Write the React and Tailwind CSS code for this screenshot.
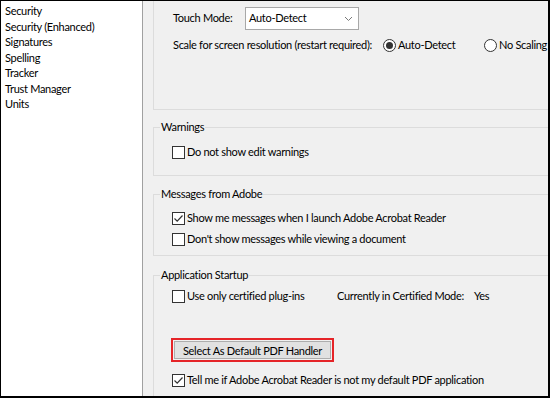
import React from 'react'

const navItems = ['Security', 'Security (Enhanced)', 'Signatures', 'Spelling', 'Tracker', 'Trust Manager', 'Units']

const Checkbox = ({ checked }) => (
  <span className="w-[13px] h-[13px] border border-[#333333] bg-white flex items-center justify-center shrink-0">
    {checked && (
      <svg width="11" height="11" viewBox="0 0 11 11">
        <path d="M1.5 5.5 L4.2 8.2 L9.5 2.5" fill="none" stroke="#333333" strokeWidth="1.2" />
      </svg>
    )}
  </span>
)

const Radio = ({ checked }) => (
  <span className="w-[13px] h-[13px] rounded-full border border-[#333333] bg-white flex items-center justify-center shrink-0">
    {checked && <span className="w-[7px] h-[7px] rounded-full bg-[#333333]" />}
  </span>
)

const CheckRow = ({ checked, children, className = '' }) => (
  <div className={`flex items-center h-[16px] whitespace-nowrap ${className}`}>
    <Checkbox checked={checked} />
    <span className="ml-[2px]">{children}</span>
  </div>
)

const Group = ({ title, className = '', children }) => (
  <fieldset className={`border border-r-0 border-[#dcdcdc] ${className}`}>
    <legend className="ml-[6px] px-[1px] leading-[16px]">{title}</legend>
    {children}
  </fieldset>
)

export default function App() {
  return (
    <div
      className="w-[550px] h-[398px] flex overflow-hidden border-black border-t border-l border-r-2 border-b-2 text-[11px] tracking-[-0.3px] text-black bg-[#f0f0f0]"
      style={{ fontFamily: 'Lato, "Noto Sans", sans-serif' }}
    >
      {/* Category list */}
      <div className="w-[142px] shrink-0 bg-white border-r border-[#a0a0a0] pl-[4px] pt-[2px] leading-[15.5px] whitespace-nowrap">
        {navItems.map((item) => (
          <div key={item}>{item}</div>
        ))}
      </div>

      {/* Preferences panel */}
      <div className="flex-1 pl-[10px] flex flex-col">
        {/* Display group (top cut off) */}
        <div className="h-[109px] border-l border-b border-[#dcdcdc] pl-[19px] shrink-0 whitespace-nowrap">
          <div className="flex items-center mt-[6px] h-[23px]">
            <span className="w-[72px]">Touch Mode:</span>
            <div className="w-[114px] h-[23px] bg-white border border-[#a8a8a8] flex items-center justify-between pl-[3px] pr-[5px]">
              <span>Auto-Detect</span>
              <svg width="9" height="6" viewBox="0 0 9 6">
                <path d="M1 1 L4.5 4.5 L8 1" fill="none" stroke="#7a7a7a" strokeWidth="1" />
              </svg>
            </div>
          </div>
          <div className="flex items-center mt-[7px] h-[16px]">
            <span className="w-[210px]">Scale for screen resolution (restart required):</span>
            <Radio checked />
            <span className="ml-[2px] w-[86px]">Auto-Detect</span>
            <Radio />
            <span className="ml-[2px]">No Scaling</span>
          </div>
        </div>

        <Group title="Warnings" className="mt-[9px] h-[57px] shrink-0">
          <CheckRow className="mt-[9px] ml-[18px]">Do not show edit warnings</CheckRow>
        </Group>

        <Group title="Messages from Adobe" className="mt-[10px] h-[70px] shrink-0">
          <CheckRow checked className="mt-[8px] ml-[18px]">Show me messages when I launch Adobe Acrobat Reader</CheckRow>
          <CheckRow className="mt-[5px] ml-[18px]">Don't show messages while viewing a document</CheckRow>
        </Group>

        <Group title="Application Startup" className="mt-[11px] flex-1 border-b-0 min-h-0">
          <div className="flex items-center h-[16px] mt-[5px] ml-[18px] whitespace-nowrap">
            <Checkbox />
            <span className="ml-[2px] w-[150px]">Use only certified plug-ins</span>
            <span className="w-[137px]">Currently in Certified Mode:</span>
            <span>Yes</span>
          </div>
          <div className="mt-[34px] ml-[17px] w-[163px] h-[24px] border-2 border-[#e52428] p-px">
            <button className="w-full h-full bg-[#e1e1e1] border border-[#adadad] flex items-center justify-center leading-none whitespace-nowrap">
              Select As Default PDF Handler
            </button>
          </div>
          <CheckRow checked className="mt-[10px] ml-[18px]">Tell me if Adobe Acrobat Reader is not my default PDF application</CheckRow>
        </Group>
      </div>
    </div>
  )
}
